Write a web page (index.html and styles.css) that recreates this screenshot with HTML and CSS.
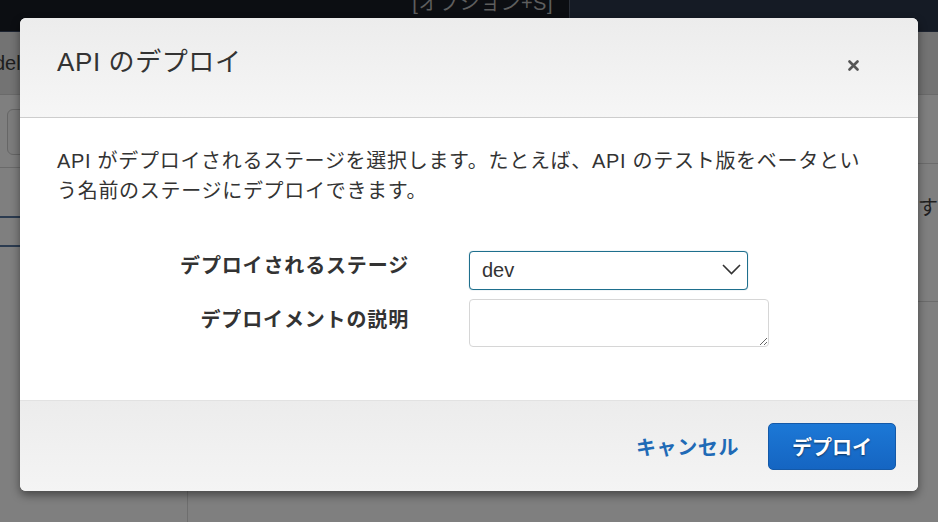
FILE: index.html
```html
<!DOCTYPE html>
<html lang="ja">
<head>
<meta charset="utf-8">
<title>API のデプロイ</title>
<link rel="stylesheet" href="styles.css">
</head>
<body>
<div class="page">
  <div class="topbar">
    <div class="topbar-left"><span class="shortcut">[オプション+S]</span></div>
    <div class="topbar-right"></div>
  </div>
  <div class="band"><span class="band-text">del</span></div>
  <div class="main">
    <div class="sidebar">
      <div class="side-btn"></div>
      <div class="side-rule"></div>
      <div class="side-tab"></div>
    </div>
    <div class="pane">
      <div class="pane-row"><span class="pane-text">す</span></div>
    </div>
  </div>
</div>

<div class="modal">
  <div class="modal-header">
    <h1 class="modal-title">API のデプロイ</h1>
    <span class="modal-close" aria-label="閉じる">
      <svg width="11" height="11" viewBox="0 0 11 11"><path d="M1.5 1.5 L9.5 9.5 M9.5 1.5 L1.5 9.5" stroke="#555" stroke-width="2.6" stroke-linecap="round" fill="none"/></svg>
    </span>
  </div>
  <div class="modal-body">
    <p class="intro">API がデプロイされるステージを選択します。たとえば、API のテスト版をベータという名前のステージにデプロイできます。</p>
    <div class="form">
      <label class="form-label">デプロイされるステージ</label>
      <div class="select">
        <span class="select-value">dev</span>
        <svg class="chevron" width="19" height="11" viewBox="0 0 19 11"><path d="M1 1 L9.5 9.5 L18 1" stroke="#333" stroke-width="1.6" fill="none"/></svg>
      </div>
      <label class="form-label form-label-2">デプロイメントの説明</label>
      <textarea class="textarea"></textarea>
    </div>
  </div>
  <div class="modal-footer">
    <span class="btn-cancel">キャンセル</span>
    <span class="btn-primary">デプロイ</span>
  </div>
</div>
</body>
</html>
```

FILE: styles.css
```css
* { box-sizing: border-box; }

html, body {
  margin: 0;
  padding: 0;
}

body {
  width: 938px;
  height: 522px;
  overflow: hidden;
  background: #7f7f7f;
  font-family: "Liberation Sans", "Noto Sans CJK JP", sans-serif;
  position: relative;
}

.page {
  display: flex;
  flex-direction: column;
  height: 522px;
}

.topbar {
  display: flex;
  height: 32px;
  flex: none;
  border-bottom: 1px solid #1c2330;
}

.topbar-left {
  width: 570px;
  background: #0c0e12;
  border-right: 1px solid #2b3039;
  display: flex;
  justify-content: flex-end;
  align-items: flex-start;
  padding-right: 16px;
  overflow: hidden;
}

.shortcut {
  font-size: 20px;
  line-height: 24px;
  margin-top: -9px;
  color: #5e5e5e;
  letter-spacing: 0.5px;
}

.topbar-right {
  flex: 1;
  background: #151b25;
}

.band {
  height: 63px;
  flex: none;
  background: #737373;
  border-bottom: 1px solid #6a6a6a;
  display: flex;
  align-items: center;
  overflow: hidden;
}

.band-text {
  font-size: 20px;
  color: #1d1d1d;
  margin-left: -6px;
}

.main {
  flex: 1;
  display: flex;
}

.sidebar {
  width: 191px;
  border-right: 1px solid #6e6e6e;
  padding-top: 14px;
}

.side-btn {
  margin-left: 7px;
  width: 120px;
  height: 46px;
  border: 1px solid #666;
  border-radius: 6px;
  background: #7c7c7c;
}

.side-rule {
  margin-top: 12px;
  border-top: 1px solid #6a6a6a;
}

.side-tab {
  margin-top: 48px;
  height: 31px;
  border-top: 2px solid #2b3b50;
  border-bottom: 2px solid #2b3b50;
}

.pane {
  flex: 1;
  padding-top: 68px;
}

.pane-row {
  border-top: 1px solid #6c6c6c;
  border-bottom: 1px solid #6c6c6c;
  height: 139px;
  padding: 28px 0 0 730px;
}

.pane-text {
  font-size: 20px;
  color: #1f1f1f;
}

/* Modal */
.modal {
  position: absolute;
  left: 20px;
  top: 18px;
  width: 898px;
  height: 473px;
  border-radius: 6px;
  background: #fff;
  box-shadow: 0 4px 10px rgba(0, 0, 0, 0.45);
  overflow: hidden;
  display: flex;
  flex-direction: column;
  color: #333;
}

.modal-header {
  height: 100px;
  flex: none;
  background: linear-gradient(#ececec, #f6f6f6);
  border-bottom: 1px solid #cdcdcd;
  display: flex;
  justify-content: space-between;
  align-items: flex-start;
  padding: 25px 59px 0 37px;
}

.modal-title {
  margin: 0;
  font-size: 26px;
  line-height: 38px;
  font-weight: normal;
  letter-spacing: 0.6px;
  color: #333;
}

.modal-close {
  margin-top: 17px;
  display: flex;
}

.modal-body {
  flex: 1;
  padding: 28px 37px 0 37px;
}

.intro {
  margin: 0;
  max-width: 818px;
  font-size: 20px;
  line-height: 30px;
  letter-spacing: 0.7px;
  color: #333;
}

.form {
  margin-top: 45px;
  display: grid;
  grid-template-columns: 351px 300px;
  column-gap: 61px;
  row-gap: 9px;
}

.form-label {
  text-align: right;
  font-size: 20px;
  line-height: 30px;
  font-weight: bold;
  letter-spacing: 0.85px;
  color: #333;
  margin-right: -1px;
}

.form-label-2 {
  padding-top: 6px;
}

.select {
  width: 279px;
  height: 39px;
  border: 1px solid #1e6f8d;
  border-radius: 4px;
  box-shadow: 0 0 1px rgba(30, 111, 141, 0.6);
  display: flex;
  align-items: center;
  justify-content: space-between;
  padding: 0 6px 0 12px;
  background: #fff;
}

.select-value {
  font-size: 20px;
  color: #333;
  margin-top: -1px;
}

.chevron {
  margin-top: -2px;
}

.textarea {
  width: 300px;
  height: 48px;
  border: 1px solid #d6d6d6;
  border-radius: 4px;
  resize: both;
  font-family: inherit;
  font-size: 16px;
  display: block;
  background: #fff;
}

.modal-footer {
  height: 91px;
  flex: none;
  border-top: 1px solid #e2e2e2;
  background: linear-gradient(#ececec, #f4f4f4);
  display: flex;
  justify-content: flex-end;
  align-items: center;
  gap: 29px;
  padding-right: 22px;
}

.btn-cancel {
  font-size: 20px;
  font-weight: bold;
  color: #1f6ab6;
  letter-spacing: 0.6px;
}

.btn-primary {
  width: 128px;
  height: 47px;
  border-radius: 5px;
  border: 1px solid #1459a8;
  background: linear-gradient(#1c78d6, #1565c2);
  color: #fff;
  font-size: 20px;
  font-weight: bold;
  display: flex;
  align-items: center;
  justify-content: center;
  text-shadow: 0 1px 2px rgba(0, 0, 0, 0.55);
}
```
